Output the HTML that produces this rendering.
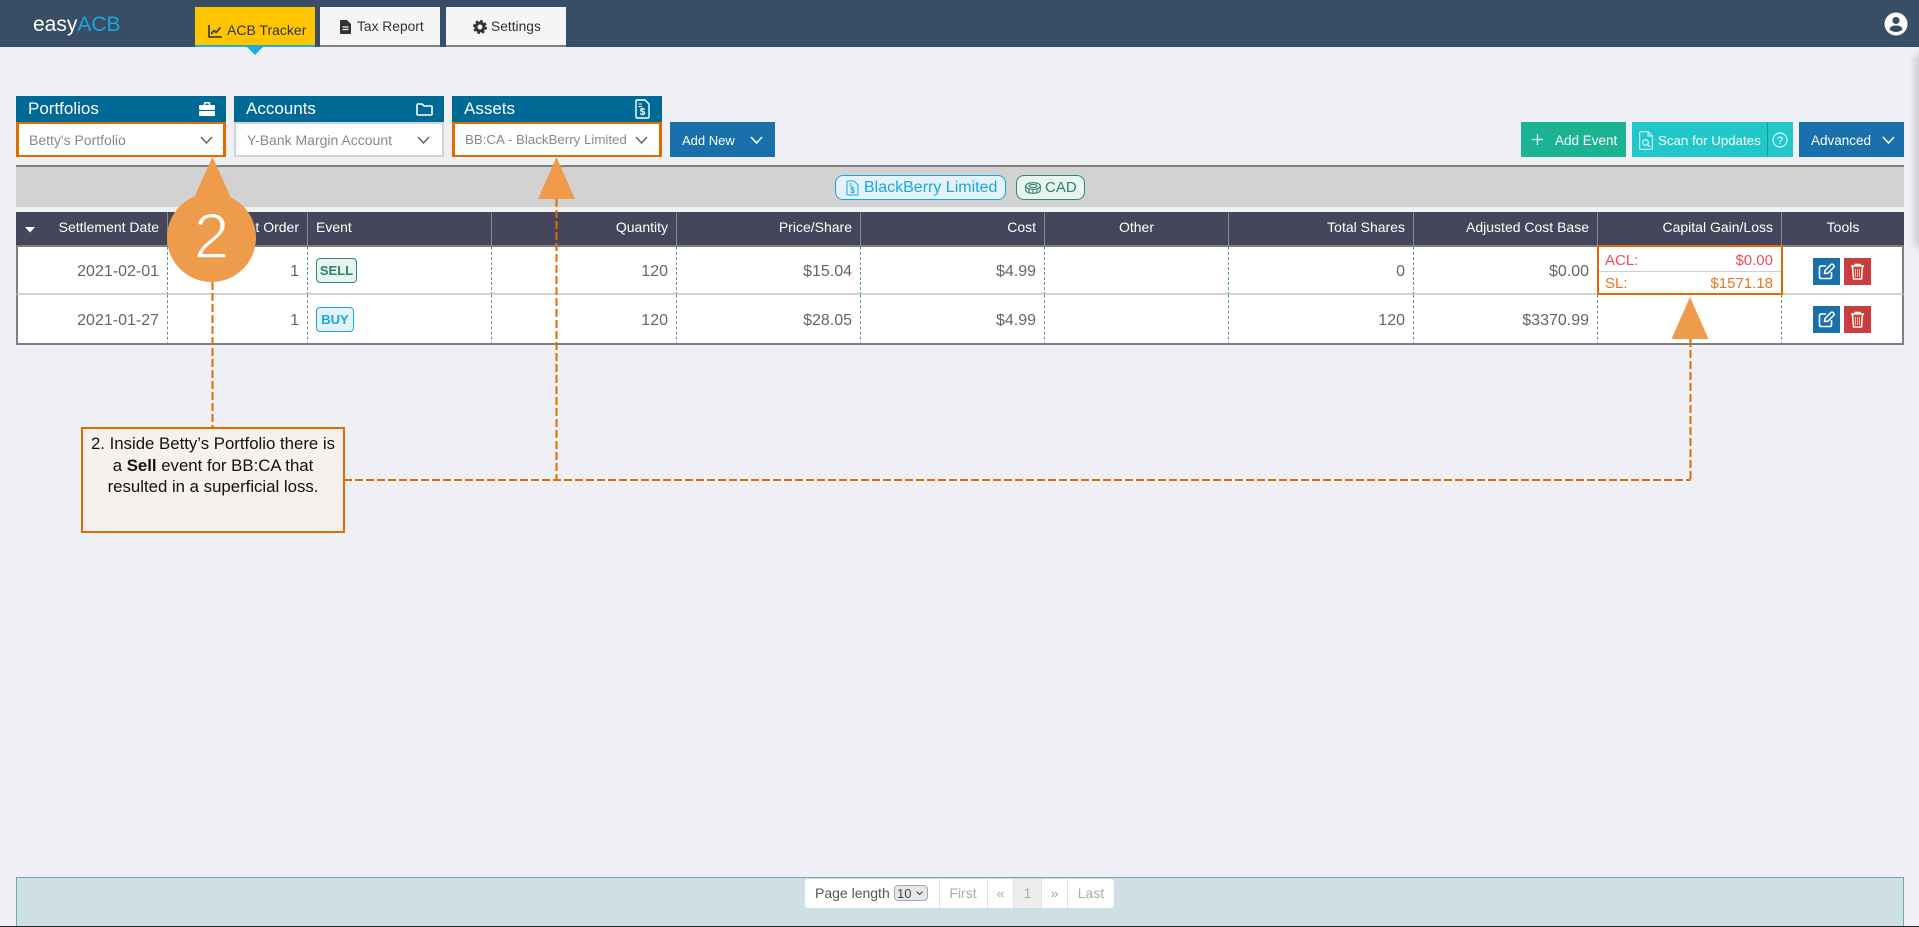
<!DOCTYPE html>
<html lang="en">
<head>
<meta charset="utf-8">
<title>easyACB - ACB Tracker</title>
<style>
*{box-sizing:border-box}
html,body{margin:0;padding:0;width:1919px;height:927px;overflow:hidden;background:#eff0f6;font-family:"Liberation Sans",sans-serif}
.a{position:absolute}
.t{position:absolute;white-space:nowrap;line-height:20px;height:20px}
svg{position:absolute;overflow:visible}
#top{left:0;top:0;width:1919px;height:47px;background:#384e66}
.tab{position:absolute;top:7px;width:120px;height:40px;background:#f5f5f5;border-bottom:2px solid #808080;color:#333;font-size:14px}
.ph{position:absolute;top:96px;width:210px;height:27px;background:#006a96;color:#fff;font-size:17px}
.sel{position:absolute;top:122px;width:210px;height:35px;background:#fff;border:2px solid #d2d2d2;color:#888;font-size:14px}
.sel.hl{border-color:#e06c00;border-width:2px 3px}
.btn{position:absolute;top:122px;height:35px;color:#fff;font-size:14px}
table{position:absolute;left:16px;top:212px;width:1888px;border-collapse:separate;border-spacing:0;table-layout:fixed}
th{height:35px;background:#45465c;color:#fff;font-size:14px;font-weight:normal;text-align:right;padding:0 8px 4px 8px;border-right:1px solid #888;border-bottom:2px solid #808080}
th:last-child{border-right:0}
td{font-size:16px;color:#666;text-align:right;padding:3px 8px 0 8px;border-right:1px dashed #5d9a96;background:#fff}
td:first-child{border-left:2px solid #808080}
td:last-child{border-right:2px solid #808080}
tr.r1 td{height:48px;border-bottom:2px solid #d2d2d2}
tr.r2 td{height:50px;border-bottom:2px solid #808080}
.badge{display:inline-block;height:25px;line-height:23px;border-radius:4px;font-size:13px;font-weight:bold;text-align:center;border:1px solid;vertical-align:middle;margin-top:-2px}
.sell{width:41px;color:#2b8269;border-color:#2e8b6e;background:#e8f4ef}
.buy{width:38px;color:#1ca4dc;border-color:#1ca4dc;background:#e4f3fb}
.pill{position:absolute;top:175px;height:25px;border-radius:8px;border:1px solid;font-size:16px;line-height:23px}
.tool{position:absolute;width:27px;height:27px}
.pg{position:absolute;top:879px;height:29px;font-size:14px;line-height:29px;color:#aaa;text-align:center;border-left:1px solid #dfe2ea}
</style>
</head>
<body>

<!-- Top bar -->
<div id="top" class="a"></div>
<div class="t" style="left:33px;top:13px;font-size:21px;height:24px;line-height:24px;color:#fff">easy<span style="color:#1ca4dc">ACB</span></div>

<div class="tab" style="left:195px;background:#ffc600;border-bottom-color:#1caee0">
  <svg style="left:13px;top:17px" width="14" height="14" viewBox="0 0 14 14"><path d="M1 1V13H14" fill="none" stroke="#333" stroke-width="1.6"/><path d="M3 10L6 6.5L8 8.5L12.5 3.5" fill="none" stroke="#333" stroke-width="1.6"/></svg>
  <span class="t" style="left:32px;top:13px">ACB Tracker</span>
</div>
<svg style="left:247px;top:47px" width="16" height="8"><path d="M0 0H16L8 8Z" fill="#1caee0"/></svg>

<div class="tab" style="left:320px">
  <svg style="left:20px;top:13px" width="11" height="14" viewBox="0 0 11 14"><path d="M0 1Q0 0 1 0H7L11 4V13Q11 14 10 14H1Q0 14 0 13Z" fill="#333"/><path d="M2.5 7H8.5M2.5 9.500H8.5" stroke="#f5f5f5" stroke-width="1.2"/></svg>
  <span class="t" style="left:37px;top:10px;font-size:13.800px">Tax Report</span>
</div>
<div class="tab" style="left:446px">
  <svg style="left:27px;top:13px" width="14" height="14" viewBox="0 0 14 14"><circle cx="7" cy="7" r="4" fill="none" stroke="#333" stroke-width="3"/><circle cx="7" cy="7" r="6" fill="none" stroke="#333" stroke-width="2" stroke-dasharray="2.7 2"/></svg>
  <span class="t" style="left:45px;top:10px;font-size:13.800px">Settings</span>
</div>

<svg style="left:1884px;top:12px" width="24" height="24" viewBox="0 0 24 24"><circle cx="12" cy="12" r="11.5" fill="#fff"/><circle cx="12" cy="8.5" r="3.6" fill="#384e66"/><path d="M5.5 17.5C6 14 9 13.5 12 13.5S18 14 18.5 17.5Q15.5 20 12 20T5.5 17.5Z" fill="#384e66"/></svg>

<!-- right edge scroll thumb shadow -->
<div class="a" style="left:1917px;top:56px;width:10px;height:190px;background:#d2d2d6;border-radius:5px;box-shadow:0 0 7px 3px rgba(0,0,0,.13)"></div>
<div class="a" style="left:0;top:0;width:1919px;height:47px;background:#384e66;z-index:-1"></div>

<!-- Selectors -->
<div class="ph" style="left:16px"><span class="t" style="left:12px;top:3px">Portfolios</span>
  <svg style="left:183px;top:6px" width="16" height="14" viewBox="0 0 16 14"><path d="M5.5 3V1.5Q5.5 .8 6.2 .8H9.8Q10.5 .8 10.5 1.500V3" fill="none" stroke="#fff" stroke-width="1.500"/><rect x="0" y="3" width="16" height="5" rx="1" fill="#fff"/><rect x="0" y="9" width="16" height="5" rx="1" fill="#fff"/></svg>
</div>
<div class="sel hl" style="left:16px"><span class="t" style="left:10px;top:6px">Betty's Portfolio</span>
  <svg style="left:181px;top:12px" width="13" height="8"><path d="M1 1L6.500 7L12 1" fill="none" stroke="#666" stroke-width="1.500"/></svg>
</div>

<div class="ph" style="left:234px"><span class="t" style="left:12px;top:3px">Accounts</span>
  <svg style="left:182px;top:7px" width="17" height="13" viewBox="0 0 17 13"><path d="M1 2Q1 1 2 1H6L8 3H15Q16 3 16 4V11Q16 12 15 12H2Q1 12 1 11Z" fill="none" stroke="#fff" stroke-width="1.600"/></svg>
</div>
<div class="sel" style="left:234px"><span class="t" style="left:11px;top:6px">Y-Bank Margin Account</span>
  <svg style="left:181px;top:12px" width="13" height="8"><path d="M1 1L6.500 7L12 1" fill="none" stroke="#666" stroke-width="1.500"/></svg>
</div>

<div class="ph" style="left:452px"><span class="t" style="left:12px;top:3px">Assets</span>
  <svg style="left:183px;top:3px" width="15" height="20" viewBox="0 0 15 20"><path d="M1 2Q1 1 2 1H10L14 5V18Q14 19 13 19H2Q1 19 1 18Z" fill="none" stroke="#fff" stroke-width="1.400"/><text x="7.500" y="16" font-size="10" font-weight="bold" fill="#fff" text-anchor="middle" font-family="Liberation Sans">$</text><path d="M3.500 5H7M3.500 7.500H7" stroke="#fff" stroke-width="1"/></svg>
</div>
<div class="sel hl" style="left:452px"><span class="t" style="left:10px;top:6px;font-size:13.300px">BB:CA - BlackBerry Limited</span>
  <svg style="left:180px;top:12px" width="13" height="8"><path d="M1 1L6.500 7L12 1" fill="none" stroke="#666" stroke-width="1.500"/></svg>
</div>

<div class="btn" style="left:670px;width:105px;background:#1a70aa"><span class="t" style="left:12px;top:9px;font-size:13px">Add New</span>
  <svg style="left:80px;top:14px" width="13" height="8"><path d="M1 1L6.500 7L12 1" fill="none" stroke="#fff" stroke-width="1.500"/></svg>
</div>

<div class="btn" style="left:1521px;width:105px;background:#1cb394">
  <svg style="left:11px;top:12px" width="11" height="11"><path d="M5.500 0V11M0 5.500H11" stroke="#fff" stroke-width="1.200"/></svg>
  <span class="t" style="left:34px;top:9px;font-size:13.500px">Add Event</span>
</div>
<div class="btn" style="left:1632px;width:161px;background:#22c7ca">
  <svg style="left:7px;top:9px" width="14" height="19" viewBox="0 0 14 19"><path d="M.7 1.500Q.7 .7 1.500 .7H9L13.300 5V17.500Q13.300 18.300 12.500 18.300H1.500Q.7 18.300 .7 17.500Z" fill="none" stroke="#e8fbfb" stroke-width="1"/><path d="M9 .7V5H13.300" fill="none" stroke="#e8fbfb" stroke-width="1"/><circle cx="6.500" cy="11.500" r="2.800" fill="none" stroke="#e8fbfb" stroke-width="1.100"/><path d="M8.500 13.500L11 16" stroke="#e8fbfb" stroke-width="1.200"/></svg>
  <span class="t" style="left:26px;top:9px;font-size:13.300px">Scan for Updates</span>
  <div class="a" style="left:135px;top:0;width:1px;height:35px;background:#169a9c"></div>
  <svg style="left:140px;top:10px" width="16" height="16" viewBox="0 0 16 16"><circle cx="8" cy="8" r="7" fill="none" stroke="#fff" stroke-width="1"/><text x="8" y="12" font-size="11" fill="#fff" text-anchor="middle" font-family="Liberation Sans">?</text></svg>
</div>
<div class="btn" style="left:1799px;width:105px;background:#1a70aa"><span class="t" style="left:12px;top:9px;font-size:13.500px">Advanced</span>
  <svg style="left:83px;top:14px" width="13" height="8"><path d="M1 1L6.500 7L12 1" fill="none" stroke="#fff" stroke-width="1.500"/></svg>
</div>

<!-- Asset band -->
<div class="a" style="left:16px;top:165px;width:1888px;height:42px;background:#d2d2d2;border-top:2px solid #808080"></div>
<div class="pill" style="left:835px;width:171px;color:#1aa6e0;border-color:#1ca4dc;background:#e4f3fb">
  <svg style="left:10px;top:4px" width="13" height="16" viewBox="0 0 13 16"><path d="M1 1.500Q1 1 1.500 1H8L12 5V14.500Q12 15 11.500 15H1.500Q1 15 1 14.500Z" fill="none" stroke="#1aa6e0" stroke-width="1"/><text x="6.500" y="13" font-size="8" font-weight="bold" fill="#1aa6e0" text-anchor="middle" font-family="Liberation Sans">$</text><path d="M3 4H6.500M3 6H6.500" stroke="#1aa6e0" stroke-width=".8"/></svg>
  <span class="a" style="left:28px;top:0;white-space:nowrap">BlackBerry Limited</span>
</div>
<div class="pill" style="left:1016px;width:69px;color:#2b8269;border-color:#2e8b6e;background:#e8f4ef">
  <svg style="left:8px;top:6px" width="16" height="12" viewBox="0 0 16 12"><ellipse cx="8" cy="4" rx="7.300" ry="3.300" fill="none" stroke="#2b8269" stroke-width="1.100"/><ellipse cx="8" cy="4" rx="4" ry="1.500" fill="none" stroke="#2b8269" stroke-width="1"/><path d="M.7 4V8C.7 10 4 11.300 8 11.300S15.300 10 15.300 8V4" fill="none" stroke="#2b8269" stroke-width="1.100"/><path d="M4 7V10.500M8 8V11M12 7V10.500" stroke="#2b8269" stroke-width="1"/></svg>
  <span class="a" style="left:28px;top:0;font-size:15px">CAD</span>
</div>

<!-- Table -->
<table>
<colgroup><col style="width:152px"><col style="width:140px"><col style="width:184px"><col style="width:185px"><col style="width:184px"><col style="width:184px"><col style="width:184px"><col style="width:185px"><col style="width:184px"><col style="width:184px"><col style="width:122px"></colgroup>
<thead><tr>
<th>Settlement Date</th><th>Event Order</th><th style="text-align:left">Event</th><th>Quantity</th><th>Price/Share</th><th>Cost</th><th style="text-align:center">Other</th><th>Total Shares</th><th>Adjusted Cost Base</th><th>Capital Gain/Loss</th><th style="text-align:center">Tools</th>
</tr></thead>
<tbody>
<tr class="r1"><td>2021-02-01</td><td>1</td><td style="text-align:left"><span class="badge sell">SELL</span></td><td>120</td><td>$15.04</td><td>$4.99</td><td></td><td>0</td><td>$0.00</td><td></td><td></td></tr>
<tr class="r2"><td>2021-01-27</td><td>1</td><td style="text-align:left"><span class="badge buy">BUY</span></td><td>120</td><td>$28.05</td><td>$4.99</td><td></td><td>120</td><td>$3370.99</td><td></td><td></td></tr>
</tbody>
</table>
<svg style="left:25px;top:227px" width="10" height="6"><path d="M0 0H10L5 5.500Z" fill="#fff"/></svg>

<!-- Capital gain box -->
<div class="a" style="left:1597px;top:245px;width:186px;height:50px;border:2px solid #e06c00;background:#fff">
  <div class="a" style="left:0;top:24px;width:182px;height:1px;background:#cfcfcf"></div>
  <span class="t" style="left:6px;top:4px;font-size:15px;color:#ef4f55">ACL:</span>
  <span class="t" style="right:8px;top:4px;font-size:15px;color:#ef4f55">$0.00</span>
  <span class="t" style="left:6px;top:27px;font-size:15px;color:#ea7320">SL:</span>
  <span class="t" style="right:8px;top:27px;font-size:15px;color:#ea7320">$1571.18</span>
</div>

<!-- Tools -->
<div class="tool" style="left:1813px;top:258px;background:#1a70aa"><svg width="27" height="27" viewBox="0 0 27 27"><path d="M13 8H8Q6.500 8 6.500 9.500V19Q6.500 20.500 8 20.500H17Q18.500 20.500 18.500 19V14" fill="none" stroke="#fff" stroke-width="1.600"/><path d="M11.500 15.500L12 12.500L18 6.500Q19 5.800 20 6.500L20.800 7.300Q21.500 8.300 20.800 9.300L14.800 15.300Z" fill="none" stroke="#fff" stroke-width="1.500"/></svg></div>
<div class="tool" style="left:1844px;top:258px;background:#cc3c3c"><svg width="27" height="27" viewBox="0 0 27 27"><path d="M7 8H20M11 8V6.500H16V8" fill="none" stroke="#fff" stroke-width="1.500"/><path d="M8.500 8.500L9.500 21H17.500L18.500 8.500" fill="none" stroke="#fff" stroke-width="1.500"/><path d="M11.500 11V19" stroke="#f3cf8c" stroke-width="1"/><path d="M13.500 11V19" stroke="#f0b0c0" stroke-width="1"/><path d="M15.500 11V19" stroke="#f3cf8c" stroke-width="1"/></svg></div>
<div class="tool" style="left:1813px;top:306px;background:#1a70aa"><svg width="27" height="27" viewBox="0 0 27 27"><path d="M13 8H8Q6.500 8 6.500 9.500V19Q6.500 20.500 8 20.500H17Q18.500 20.500 18.500 19V14" fill="none" stroke="#fff" stroke-width="1.600"/><path d="M11.500 15.500L12 12.500L18 6.500Q19 5.800 20 6.500L20.800 7.300Q21.500 8.300 20.800 9.300L14.800 15.300Z" fill="none" stroke="#fff" stroke-width="1.500"/></svg></div>
<div class="tool" style="left:1844px;top:306px;background:#cc3c3c"><svg width="27" height="27" viewBox="0 0 27 27"><path d="M7 8H20M11 8V6.500H16V8" fill="none" stroke="#fff" stroke-width="1.500"/><path d="M8.500 8.500L9.500 21H17.500L18.500 8.500" fill="none" stroke="#fff" stroke-width="1.500"/><path d="M11.500 11V19" stroke="#f3cf8c" stroke-width="1"/><path d="M13.500 11V19" stroke="#f0b0c0" stroke-width="1"/><path d="M15.500 11V19" stroke="#f3cf8c" stroke-width="1"/></svg></div>

<!-- Footer -->
<div class="a" style="left:16px;top:877px;width:1888px;height:50px;background:#cfe0e4;border:1px solid #6fa7b8;border-bottom:0"></div>
<div class="a" style="left:805px;top:879px;width:309px;height:29px;background:#fff;border-radius:3px;box-shadow:0 0 1px #c9ccd6"></div>
<span class="t" style="left:815px;top:883px;font-size:14px;color:#555">Page length</span>
<div class="a" style="left:894px;top:885px;width:34px;height:16px;background:#e6e7eb;border:1px solid #aaa;border-radius:4px;font-size:13px;line-height:15px;color:#444;padding-left:2px">10
  <svg style="left:21px;top:5px" width="7" height="5"><path d="M.5 .5L3.500 3.500L6.500 .5" fill="none" stroke="#444" stroke-width="1"/></svg>
</div>
<div class="pg" style="left:939px;width:47px">First</div>
<div class="pg" style="left:987px;width:26px">«</div>
<div class="pg" style="left:1013px;width:28px;background:#eee">1</div>
<div class="pg" style="left:1041px;width:26px">»</div>
<div class="pg" style="left:1067px;width:47px">Last</div>
<div class="a" style="left:0;top:926px;width:1919px;height:1px;background:#23262c"></div>

<!-- Annotation overlay -->
<svg style="left:0;top:0" width="1919" height="927">
  <g stroke="#e06c00" stroke-width="2" fill="none" stroke-dasharray="8 3">
    <path d="M212.500 282V427"/>
    <path d="M556.500 199V480"/>
    <path d="M344 480H1690.500"/>
    <path d="M1690.500 339V480"/>
  </g>
  <g fill="#ee9b4b">
    <path d="M212.500 157L232 200H193Z"/>
    <circle cx="211.500" cy="237.500" r="44.500"/>
    <path d="M556.500 157L575 199H538Z"/>
    <path d="M1690 297L1708.500 339H1671.500Z"/>
  </g>
  <text x="211.500" y="258" font-family="Liberation Sans" font-size="64" fill="#fff" stroke="#ee9b4b" stroke-width="1.500" text-anchor="middle">2</text>
</svg>

<!-- Callout -->
<div class="a" style="left:81px;top:427px;width:264px;height:106px;background:#f6f1ee;border:2px solid #e06c00;text-align:center;color:#111;font-size:16.800px;line-height:21.500px;padding-top:4px;white-space:nowrap">
2. Inside Betty’s Portfolio there is<br>a <b>Sell</b> event for BB:CA that<br>resulted in a superficial loss.
</div>

</body>
</html>
